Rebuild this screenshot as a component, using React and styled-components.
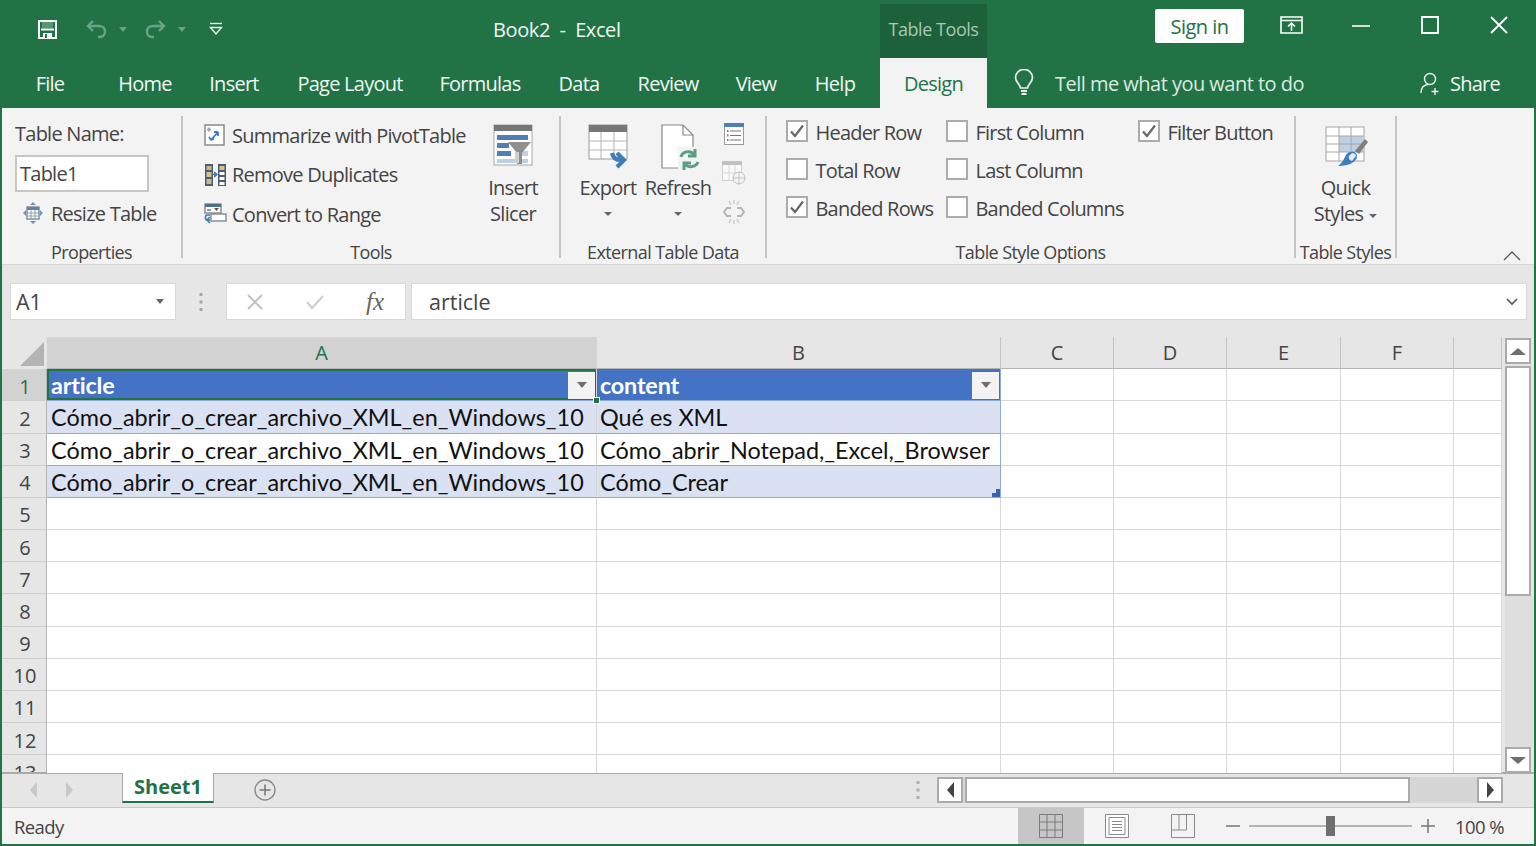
import React from "react";
import styled, { createGlobalStyle } from "styled-components";

const GREEN = "#217346";
const INK = "#444444";
const UI = '"Open Sans", "Noto Sans", sans-serif';

const Global = createGlobalStyle`
  html, body { margin: 0; padding: 0; overflow: hidden; }
  * { box-sizing: border-box; }
  body { font-family: ${UI}; }
`;

const Window = styled.div`
  width: 1536px; height: 846px; background: ${GREEN};
  padding: 0 2px 2px; display: flex; flex-direction: column; overflow: hidden;
  font-size: 20px; letter-spacing: -0.75px; color: ${INK};
`;

/* ---------- title bar ---------- */
const TitleBar = styled.div`display: flex; height: 58px; flex: none; align-items: center; color: #fff;`;
const TitleLeft = styled.div`width: 878px; display: flex; align-items: center; height: 100%;`;
const Qat = styled.div`width: 221px; padding-left: 36px; display: flex; align-items: center; flex: none;`;
const QatIcon = styled.svg`display: block; flex: none; margin-left: ${p => p.$ml || 0}px;`;
const WindowTitle = styled.div`margin-left: 270px; white-space: pre; color: #f1f6f3; font-size: 20px; letter-spacing: -0.4px;`;
const ContextTab = styled.div`
  width: 107px; align-self: stretch; margin-top: 4px; padding-bottom: 4px; background: #1c6139; color: #a8c8b4;
  display: flex; align-items: center; justify-content: center; font-size: 18px; letter-spacing: -0.45px;
`;
const SignIn = styled.div`
  margin-left: 168px; width: 89px; height: 34px; background: #fff; border-radius: 2px; color: ${GREEN};
  display: flex; align-items: center; justify-content: center; margin-top: -6px; letter-spacing: -0.55px;
`;
const WinControls = styled.div`display: flex; align-items: center; margin-top: -9px;`;
const WinIcon = styled.svg`display: block; flex: none; margin-left: ${p => p.$ml}px;`;

/* ---------- tabs ---------- */
const TabRow = styled.div`display: flex; height: 50px; flex: none; align-items: stretch; color: #f1f6f3;`;
const Tab = styled.div`
  width: ${p => p.$w}px; flex: none; display: flex; align-items: center; justify-content: center;
  margin-left: ${p => p.$ml || 0}px;
  ${p => p.$active && `background: #f3f3f3; color: ${GREEN};`}
`;
const TellMe = styled.div`display: flex; align-items: center; margin-left: 27px; gap: 21px; color: #dbe9e1; letter-spacing: -0.52px;`;
const Share = styled.div`display: flex; align-items: center; margin-left: auto; padding-right: 34px; gap: 9px; color: #f1f6f3;`;

/* ---------- ribbon ---------- */
const Ribbon = styled.div`display: flex; height: 157px; flex: none; background: #f3f3f3; border-bottom: 1px solid #d6d6d6;`;
const Group = styled.div`display: flex; flex-direction: column; flex: none; width: ${p => p.$w}px;`;
const GroupBody = styled.div`
  flex: 1; min-height: 0; display: flex; padding: ${p => p.$pad || 0};
  justify-content: ${p => p.$justify || "flex-start"};
`;
const GroupLabel = styled.div`height: 26px; flex: none; padding-top: 1px; line-height: 26px; text-align: center; font-size: 18px; letter-spacing: -0.6px; white-space: nowrap;`;
const Divider = styled.div`width: 2px; height: 142px; margin-top: 8px; flex: none; background: #c6c6c6;`;
const Column = styled.div`display: flex; flex-direction: column;`;
const FieldLabel = styled.div`height: 24px; line-height: 24px; margin-top: 14px;`;
const NameInput = styled.div`
  width: 134px; height: 37px; margin-top: 9px; border: 2px solid #c6c6c6; background: #fff; padding-left: 3px;
  line-height: 33px;
`;
const ToolRow = styled.div`
  display: flex; align-items: center; height: ${p => p.$h || 39.5}px; white-space: nowrap;
  margin-top: ${p => p.$mt || 0}px; margin-left: ${p => p.$ml || 0}px;
`;
const RowIcon = styled.div`width: ${p => p.$w || 28}px; flex: none; display: flex; align-items: center;`;
const LargeButton = styled.div`
  width: ${p => p.$w || 70}px; flex: none; display: flex; flex-direction: column; align-items: center;
  padding-top: ${p => p.$pt || 16}px; margin-top: ${p => p.$mt || 0}px; line-height: 26px; white-space: nowrap; text-align: center;
  letter-spacing: -0.7px;
`;
const LargeIconBox = styled.div`height: ${p => p.$h || 51}px; flex: none; padding-left: ${p => p.$pl || 0}px;`;
const DropArrow = styled.span`
  display: block; width: 0; height: 0; margin: 11px auto 0;
  border-left: 4px solid transparent; border-right: 4px solid transparent; border-top: 4px solid #666;
`;
const InlineArrow = styled.span`
  display: inline-block; width: 0; height: 0; margin: 0 0 3px 6px;
  border-left: 4px solid transparent; border-right: 4px solid transparent; border-top: 4px solid #666;
`;
const SmallIcons = styled.div`display: flex; flex-direction: column; align-items: center; padding-top: 6px; margin-left: 11px; width: 20px;`;
const SmallIconCell = styled.div`height: 39px; display: flex; align-items: center; justify-content: center;`;
const OptionsGrid = styled.div`
  flex: 1; display: grid; grid-template-columns: 160px 192px auto; grid-auto-rows: 38px; padding: 5px 0 0 18.500px;
  grid-template-rows: repeat(3, 38px); letter-spacing: -0.8px;
`;
const Option = styled.div`display: flex; align-items: center; gap: 8px; white-space: nowrap;`;
const CheckBox = styled.div`
  width: 22px; height: 22px; margin-top: -2px; border: 2px solid #ababab; background: #fff; flex: none;
  display: flex; align-items: center; justify-content: center;
`;
const CollapseBox = styled.div`margin-left: auto; align-self: flex-end; padding: 0 13px 3px 0;`;

/* ---------- formula bar ---------- */
const FormulaBar = styled.div`height: 72px; flex: none; background: #e6e6e6; display: flex; padding: 18px 7px 0 8px; align-items: flex-start;`;
const FieldBox = styled.div`
  height: 37px; background: #fff; border: 1px solid #d8d8d8; display: flex; align-items: center;
  width: ${p => (p.$w ? p.$w + "px" : "auto")}; flex: ${p => (p.$w ? "none" : 1)};
  margin-left: ${p => p.$ml || 0}px; padding: 0 ${p => p.$pr || 0}px 0 ${p => p.$pl || 0}px;
  justify-content: space-between;
  font-size: 21.5px; letter-spacing: 0;
`;
const GripBox = styled.div`width: 50px; height: 37px; flex: none; display: flex; align-items: center; justify-content: center;`;
const FxMark = styled.span`font-family: "Liberation Serif", serif; font-style: italic; font-weight: 400; font-size: 25px; color: #666;`;

/* ---------- sheet ---------- */
const SheetArea = styled.div`height: 436px; flex: none; display: flex; background: #e6e6e6;`;
const GridClip = styled.div`width: 1500px; flex: none; height: 436px; overflow: hidden;`;
const SheetGrid = styled.div`
  display: grid; grid-template-columns: 45px 550px 404px 113px 113px 114px 113px 48px; grid-auto-rows: 32.18px;
`;
const CornerCell = styled.div`background: #e6e6e6; display: flex; align-items: flex-end; justify-content: flex-end; padding: 0 3px 3px 0;`;
const ColHead = styled.div`
  display: flex; align-items: center; justify-content: center; font-size: 20px; letter-spacing: 0;
  background: ${p => (p.$on ? "#d2d2d2" : "#e6e6e6")}; color: ${p => (p.$on ? GREEN : "#444")};
  border-right: 1px solid ${p => (p.$on ? "#d2d2d2" : "#c4c4c4")}; border-bottom: 1px solid #b4b4b4;
`;
const RowHead = styled.div`
  display: flex; align-items: center; justify-content: center; font-size: 20px; letter-spacing: 0; padding: 3px 0 0 2px;
  background: ${p => (p.$on ? "#d2d2d2" : "#e6e6e6")}; color: ${p => (p.$on ? GREEN : "#444")};
  border-bottom: 1px solid #cfcfcf; border-right: 1px solid #b4b4b4;
`;
const Cell = styled.div`
  position: relative; display: flex; align-items: center; padding: 1px 0 0 ${p => p.$pl}px; white-space: nowrap; overflow: visible;
  font-family: Lato, "Liberation Sans", sans-serif; font-size: 23.4px; letter-spacing: 0; color: #111;
  background: ${p => (p.$head ? "#4472c4" : p.$band ? "#d9e1f2" : "#fff")};
  ${p => p.$head && "color: #fff; font-weight: 700; letter-spacing: -0.2px;"}
  border-right: 1px solid ${p => (p.$tbl ? (p.$edge ? "#8ea9db" : "#d4d4d4") : "#d9d9d9")};
  border-bottom: 1px solid ${p => (p.$tbl ? "#8ea9db" : "#d9d9d9")};
  ${p => p.$sel && `box-shadow: inset 0 0 0 2px ${GREEN};`}
`;
const FilterBtn = styled.div`
  position: absolute; right: 1px; top: 3px; width: 27px; height: 27px; background: #f3f3f3;
  display: flex; align-items: center; justify-content: center;
`;
const FillHandle = styled.div`position: absolute; right: -4px; bottom: -4px; width: 7px; height: 7px; background: ${GREEN}; border: 1px solid #fff; z-index: 2;`;
const ResizeMark = styled.svg`position: absolute; right: 0; bottom: 0; display: block;`;

const VScroll = styled.div`width: 34px; flex: none; display: flex; flex-direction: column; padding: 1px 3px 0 3px;`;
const ScrollBtn = styled.div`
  width: 26px; height: ${p => p.$h || 26}px; flex: none; background: #fff; border: 2px solid #ababab;
  display: flex; align-items: center; justify-content: center;
`;
const VThumb = styled.div`width: 26px; height: 230px; flex: none; background: #fff; border: 2px solid #ababab; margin-top: 2px;`;
const VTrack = styled.div`flex: 1; background: #dedede;`;
const Tri = styled.span`
  display: block; width: 0; height: 0;
  ${p => p.$dir === "up" && "border-left: 8px solid transparent; border-right: 8px solid transparent; border-bottom: 7px solid #6e6e6e;"}
  ${p => p.$dir === "down" && "border-left: 8px solid transparent; border-right: 8px solid transparent; border-top: 7px solid #6e6e6e;"}
  ${p => p.$dir === "left" && `border-top: 8px solid transparent; border-bottom: 8px solid transparent; border-right: 7px solid ${p.$c || "#444"};`}
  ${p => p.$dir === "right" && `border-top: 8px solid transparent; border-bottom: 8px solid transparent; border-left: 7px solid ${p.$c || "#444"};`}
`;

/* ---------- sheet tabs ---------- */
const SheetBar = styled.div`height: 36px; flex: none; margin-top: -1px; background: #e6e6e6; border-top: 2px solid #ababab; border-bottom: 1px solid #c8c8c8; display: flex; align-items: flex-start;`;
const TabNav = styled.div`width: 120px; height: 32px; flex: none; display: flex; align-items: center; gap: 29px; padding-left: 28px;`;
const SheetTab = styled.div`
  width: 92px; height: 31px; margin-top: -2px; flex: none; background: #fff; color: ${GREEN}; font-weight: 700; font-size: 20px; letter-spacing: 0;
  border: 1px solid #ababab; border-top: none; border-bottom: 2px solid ${GREEN}; display: flex; align-items: center; justify-content: center;
`;
const AddSheet = styled.svg`display: block; flex: none; margin: 5px 0 0 40px;`;
const SplitDots = styled.svg`display: block; flex: none; margin: 7px 17px 0 auto;`;
const HScroll = styled.div`width: 566px; height: 26px; margin: 3px 31px 0 0; flex: none; display: flex; align-items: stretch; background: #d6d6d6;`;
const HButton = styled.div`width: 26px; flex: none; background: #fff; border: 2px solid #ababab; display: flex; align-items: center; justify-content: center;`;
const HThumb = styled.div`width: 445px; flex: none; margin-left: 2px; background: #fff; border: 2px solid #ababab;`;

/* ---------- status bar ---------- */
const StatusBar = styled.div`flex: 1; min-height: 0; background: #f3f3f3; display: flex; align-items: stretch; font-size: 18.5px; letter-spacing: -0.6px;`;
const Ready = styled.div`display: flex; align-items: center; padding-left: 12px;`;
const ViewBtns = styled.div`display: flex; margin-left: auto;`;
const ViewBtn = styled.div`
  width: 66px; display: flex; align-items: center; justify-content: center;
  background: ${p => (p.$on ? "#c6c6c6" : "transparent")};
`;
const ZoomBox = styled.div`display: flex; align-items: center; width: 318px; padding-left: 10px;`;
const ZoomTrack = styled.div`position: relative; width: 163px; height: 2px; background: #b4b4b4; margin: 0 9px;`;
const ZoomThumb = styled.div`position: absolute; left: 77px; top: -9px; width: 9px; height: 20px; background: #6e6e6e;`;
const Percent = styled.div`margin-left: 20px; white-space: nowrap;`;

/* ---------- icons ---------- */
const Check = () => (
  <svg width="16" height="14" viewBox="0 0 16 14"><path d="M2 7.500l4 4.500L14 1.500" fill="none" stroke="#666" strokeWidth="2.200" /></svg>
);
const Opt = ({ on, children }) => (
  <Option><CheckBox>{on && <Check />}</CheckBox>{children}</Option>
);
const SaveIcon = () => (
  <QatIcon width="19" height="19" viewBox="0 0 19 19" $ml="0">
    <path d="M1 1h17v17H1z" fill="none" stroke="#fff" strokeWidth="2" />
    <path d="M4 1h11v7H4z" fill="#fff" opacity=".25" /><path d="M3 9.500h13" stroke="#fff" strokeWidth="2" />
    <path d="M5 18v-5h9v5z" fill="#fff" /><path d="M7 14v4h2v-4z" fill="#217346" />
  </QatIcon>
);
const UndoIcon = ({ flip, ml }) => (
  <QatIcon width="21" height="20" viewBox="0 0 21 20" $ml={ml} style={flip ? { transform: "scaleX(-1)" } : undefined}>
    <path d="M7 2L2 7l5 5M2 7h11c3.500 0 6 2.200 6 5.500S17 18 14 18h-2" fill="none" stroke="#6aa385" strokeWidth="2.400" />
  </QatIcon>
);
const QatDrop = ({ ml }) => (
  <QatIcon width="8" height="5" viewBox="0 0 8 5" $ml={ml}><path d="M0 0h8L4 5z" fill="#6aa385" /></QatIcon>
);
const Customize = () => (
  <QatIcon width="14" height="14" viewBox="0 0 14 14" $ml="23">
    <path d="M1 1.500h12" stroke="#e7efe9" strokeWidth="1.400" /><path d="M1.500 5.500L7 12l5.500-6.500z" fill="none" stroke="#e7efe9" strokeWidth="1.400" />
  </QatIcon>
);
const PivotIcon = () => (
  <svg width="21" height="22" viewBox="0 0 21 22" style={{ display: "block", flex: "none" }}>
    <rect x="1" y="1" width="19" height="20" fill="#fff" stroke="#8b8b8b" strokeWidth="1.500" />
    <path d="M5 3.500v4M3 5.500h4" stroke="#9a9a9a" strokeWidth="1.500" />
    <path d="M7 16l7-8M14 8h-4M14 8v4M7 16l-2-3M7 16l3-1" fill="none" stroke="#3f7cba" strokeWidth="1.800" />
  </svg>
);
const DuplicatesIcon = () => (
  <svg width="23" height="22" viewBox="0 0 23 22" style={{ display: "block", flex: "none" }}>
    <path d="M1 0h8v22H1z" fill="#4d5d6d" /><path d="M2.500 8h5v5h-5z" fill="#d8c28e" /><path d="M2.500 2h5v4h-5zM2.500 15h5v5h-5z" fill="#d8c28e" opacity=".9" />
    <path d="M14 0h8v22h-8z" fill="#4d5d6d" /><path d="M15.500 8h5v3h-5zM15.500 13h5v3h-5zM15.500 18h5v3h-5z" fill="#fff" /><path d="M15.500 2h5v4h-5z" fill="#d8c28e" />
    <path d="M9 10.500h3M10.500 8l3 2.500-3 2.500z" fill="#3f7cba" stroke="#3f7cba" />
  </svg>
);
const ConvertIcon = () => (
  <svg width="23" height="22" viewBox="0 0 23 22" style={{ display: "block", flex: "none" }}>
    <rect x="1" y="1" width="16" height="9" fill="#fff" stroke="#7f7f7f" strokeWidth="1.300" />
    <path d="M1 1h16v3H1z" fill="#4d6f8f" /><path d="M3 6h4v2H3z" fill="#999" /><path d="M10 5h5l-2.500 3z" fill="#555" />
    <rect x="7" y="11" width="15" height="7" fill="#fff" stroke="#7f7f7f" strokeWidth="1.300" />
    <path d="M6 12H3c-2 0-2 5 0 5h3M6 20l-3-3 3-3" fill="none" stroke="#3f7cba" strokeWidth="1.700" />
  </svg>
);
const ResizeIcon = () => (
  <svg width="20" height="22" viewBox="0 0 20 22" style={{ display: "block", flex: "none" }}>
    <rect x="4" y="5" width="12" height="12" fill="#fff" stroke="#6f7f8f" strokeWidth="1.300" />
    <path d="M4 5h12v3H4z" fill="#5f83aa" /><path d="M8 8v9M12 8v9M4 11h12M4 14h12" stroke="#8f9fae" />
    <path d="M10 0l3 3H7zM10 22l3-3H7zM0 11l3-3v6zM20 11l-3-3v6z" fill="#6f93ba" />
  </svg>
);
const SlicerIcon = () => (
  <svg width="40" height="42" viewBox="0 0 40 42" style={{ display: "block" }}>
    <rect x="1" y="1" width="38" height="40" fill="#fff" stroke="#a6a6a6" />
    <path d="M1 1h38v6H1z" fill="#767676" />
    <path d="M4 11h31v5H4z" fill="#4f7fb6" /><path d="M4 19h12v5H4zM4 27h14v5H4z" fill="#4f7fb6" />
    <path d="M4 35h31v4H4z" fill="#bcd0e6" /><path d="M26 27h9v5h-9z" fill="#bcd0e6" />
    <path d="M15 18h23l-9 11v11h-5V29z" fill="#8f8f8f" /><path d="M22 28h4v11h-4z" fill="#d0d0d0" />
  </svg>
);
const ExportIcon = () => (
  <svg width="44" height="46" viewBox="0 0 44 46" style={{ display: "block" }}>
    <rect x="1" y="1" width="38" height="34" fill="#fff" stroke="#9a9a9a" />
    <path d="M1 1h38v7H1z" fill="#767676" />
    <path d="M1 17h38M1 26h38M13 8v27M26 8v27" stroke="#b4b4b4" />
    <path d="M24 29c1 5 5 7 9 7M29 29l7 7-7 7" fill="none" stroke="#3f7cba" strokeWidth="4.200" />
  </svg>
);
const RefreshIcon = () => (
  <svg width="44" height="46" viewBox="0 0 44 46" style={{ display: "block" }}>
    <path d="M4 1h21l10 10v33H4z" fill="#fff" stroke="#8a8a8a" strokeWidth="1.200" />
    <path d="M25 1v10h10" fill="none" stroke="#8a8a8a" strokeWidth="1.200" />
    <rect x="20" y="23" width="24" height="23" fill="#f3f3f3" />
    <path d="M23 33c1-5 9-8 14-2M37 25v7h-7M40 38c-2 5-10 7-14 1M26 46v-7h7" fill="none" stroke="#5a9f82" strokeWidth="3" />
  </svg>
);
const SmallList = () => (
  <svg width="20" height="22" viewBox="0 0 20 22" style={{ display: "block" }}>
    <rect x=".5" y=".5" width="19" height="21" fill="#fff" stroke="#9a9a9a" /><path d="M0 0h20v4H0z" fill="#4f7fb6" />
    <path d="M6 8h11M6 12.500h11M6 17h11" stroke="#777" /><path d="M3 8h1.500M3 12.500h1.500M3 17h1.500" stroke="#777" strokeWidth="2" />
  </svg>
);
const SmallWeb = () => (
  <svg width="24" height="24" viewBox="0 0 24 24" style={{ display: "block", opacity: 0.55 }}>
    <rect x=".5" y=".5" width="19" height="19" fill="#fff" stroke="#b4b4b4" /><path d="M0 0h20v4H0z" fill="#9a9a9a" />
    <path d="M7 4v16M13 4v16M0 12h20" stroke="#c4c4c4" />
    <circle cx="17" cy="17" r="6" fill="#f3f3f3" stroke="#999" /><path d="M11 17h12M17 11v12" stroke="#999" />
  </svg>
);
const SmallUnlink = () => (
  <svg width="22" height="24" viewBox="0 0 22 24" style={{ display: "block", opacity: 0.6 }}>
    <path d="M8 8H4l-3 4 3 4h4M14 8h4l3 4-3 4h-4" fill="none" stroke="#8a8a8a" strokeWidth="2" />
    <path d="M6 1l2 4M16 1l-2 4M11 0v4M6 23l2-4M16 23l-2-4M11 24v-4" stroke="#b0b0b0" strokeWidth="1.400" />
  </svg>
);
const QuickIcon = () => (
  <svg width="44" height="42" viewBox="0 0 44 42" style={{ display: "block" }}>
    <rect x="1" y="1" width="38" height="34" fill="#fff" stroke="#a6a6a6" />
    <path d="M14 10h25v16H14z" fill="#bed0e6" />
    <path d="M1 10h38M1 18h38M1 26h38M14 1v34M26 1v34" stroke="#a6a6a6" />
    <path d="M30 25L40 13l3 3-9 12z" fill="#7f7f7f" />
    <path d="M26 26c3-1 6 1 6 4 0 6-8 10-19 10 3-2 5-5 7-9 1-3 3-5 6-5z" fill="#3f7cba" />
    <path d="M27 27c2 0 4 1 4 3l-4 5c-3-1-4-3-3-5z" fill="#fff" opacity=".85" />
  </svg>
);
const Chev = () => (
  <svg width="18" height="11" viewBox="0 0 18 11" style={{ display: "block" }}><path d="M1 10l8-8 8 8" fill="none" stroke="#555" strokeWidth="1.300" /></svg>
);

const COLS = ["A", "B", "C", "D", "E", "F", ""];
const ROWS = {
  2: ["Cómo_abrir_o_crear_archivo_XML_en_Windows_10", "Qué es XML"],
  3: ["Cómo_abrir_o_crear_archivo_XML_en_Windows_10", "Cómo_abrir_Notepad,_Excel,_Browser"],
  4: ["Cómo_abrir_o_crear_archivo_XML_en_Windows_10", "Cómo_Crear"],
};
const FilterArrow = () => (
  <svg width="12" height="7" viewBox="0 0 12 7"><path d="M1 0h10L6 6z" fill="#6e6e6e" /></svg>
);

export default function App() {
  const rowNums = Array.from({ length: 13 }, (_, i) => i + 1);
  return (
    <Window>
      <Global />
      <TitleBar>
        <TitleLeft>
          <Qat>
            <SaveIcon />
            <UndoIcon ml={29} />
            <QatDrop ml={12} />
            <UndoIcon flip ml={18} />
            <QatDrop ml={12} />
            <Customize />
          </Qat>
          <WindowTitle>Book2  -  Excel</WindowTitle>
        </TitleLeft>
        <ContextTab>Table Tools</ContextTab>
        <SignIn>Sign in</SignIn>
        <WinControls>
          <WinIcon width="23" height="18" viewBox="0 0 23 18" $ml="36">
            <path d="M1 1h21v16H1zM1 4.500h21" fill="none" stroke="#fff" strokeWidth="1.600" />
            <path d="M11.500 15V7.500M8 10.500l3.500-3.500 3.500 3.500" fill="none" stroke="#fff" strokeWidth="1.500" />
          </WinIcon>
          <WinIcon width="18" height="18" viewBox="0 0 18 18" $ml="49"><path d="M0 10h18" stroke="#fff" strokeWidth="1.600" /></WinIcon>
          <WinIcon width="18" height="18" viewBox="0 0 18 18" $ml="51"><path d="M1 1h16v16H1z" fill="none" stroke="#fff" strokeWidth="1.800" /></WinIcon>
          <WinIcon width="18" height="18" viewBox="0 0 18 18" $ml="51"><path d="M1 1l16 16M17 1L1 17" fill="none" stroke="#fff" strokeWidth="1.800" /></WinIcon>
        </WinControls>
      </TitleBar>

      <TabRow>
        <Tab $w={96}>File</Tab>
        <Tab $w={94}>Home</Tab>
        <Tab $w={84}>Insert</Tab>
        <Tab $w={148}>Page Layout</Tab>
        <Tab $w={112}>Formulas</Tab>
        <Tab $w={86}>Data</Tab>
        <Tab $w={92}>Review</Tab>
        <Tab $w={84}>View</Tab>
        <Tab $w={74}>Help</Tab>
        <Tab $w={107} $ml={8} $active>Design</Tab>
        <TellMe>
          <svg width="20" height="28" viewBox="0 0 20 28" style={{ display: "block" }}>
            <path d="M6.500 19c0-3.500-5-5.500-5-10.500a8.500 8 0 0 1 17 0c0 5-5 7-5 10.500z" fill="none" stroke="#eef4f0" strokeWidth="1.700" />
            <path d="M7 22h6M7.500 25h5" stroke="#eef4f0" strokeWidth="1.800" />
          </svg>
          Tell me what you want to do
        </TellMe>
        <Share>
          <svg width="21" height="24" viewBox="0 0 21 24" style={{ display: "block" }}>
            <circle cx="10" cy="8" r="5.500" fill="none" stroke="#eef4f0" strokeWidth="1.400" />
            <path d="M1 22c0-5 3-8 7-8.500M15 17v7M11.500 20.500h7" fill="none" stroke="#eef4f0" strokeWidth="1.400" />
          </svg>
          Share
        </Share>
      </TabRow>

      <Ribbon>
        <Group $w={179}>
          <GroupBody $pad="0 0 0 13px">
            <Column>
              <FieldLabel>Table Name:</FieldLabel>
              <NameInput>Table1</NameInput>
              <ToolRow $h={24} $mt={9} $ml={8}><RowIcon><ResizeIcon /></RowIcon>Resize Table</ToolRow>
            </Column>
          </GroupBody>
          <GroupLabel>Properties</GroupLabel>
        </Group>
        <Divider />
        <Group $w={376}>
          <GroupBody $pad="7.500px 16px 0 21px" $justify="space-between">
            <Column>
              <ToolRow><RowIcon><PivotIcon /></RowIcon>Summarize with PivotTable</ToolRow>
              <ToolRow><RowIcon><DuplicatesIcon /></RowIcon>Remove Duplicates</ToolRow>
              <ToolRow><RowIcon><ConvertIcon /></RowIcon>Convert to Range</ToolRow>
            </Column>
            <LargeButton $w={60} $mt={-7.5}>
              <LargeIconBox><SlicerIcon /></LargeIconBox>
              Insert<br />Slicer
            </LargeButton>
          </GroupBody>
          <GroupLabel>Tools</GroupLabel>
        </Group>
        <Divider />
        <Group $w={204}>
          <GroupBody $pad="0 0 0 12px">
            <LargeButton>
              <LargeIconBox $pl={3}><ExportIcon /></LargeIconBox>
              Export<DropArrow />
            </LargeButton>
            <LargeButton>
              <LargeIconBox $pl={3}><RefreshIcon /></LargeIconBox>
              Refresh<DropArrow />
            </LargeButton>
            <SmallIcons>
              <SmallIconCell><SmallList /></SmallIconCell>
              <SmallIconCell><SmallWeb /></SmallIconCell>
              <SmallIconCell><SmallUnlink /></SmallIconCell>
            </SmallIcons>
          </GroupBody>
          <GroupLabel>External Table Data</GroupLabel>
        </Group>
        <Divider />
        <Group $w={527}>
          <OptionsGrid>
            <Opt on>Header Row</Opt>
            <Opt>First Column</Opt>
            <Opt on>Filter Button</Opt>
            <Opt>Total Row</Opt>
            <Opt>Last Column</Opt>
            <span />
            <Opt on>Banded Rows</Opt>
            <Opt>Banded Columns</Opt>
          </OptionsGrid>
          <GroupLabel>Table Style Options</GroupLabel>
        </Group>
        <Divider />
        <Group $w={99}>
          <GroupBody>
            <LargeButton $w={99} $pt={18}>
              <LargeIconBox $h={49} $pl={3}><QuickIcon /></LargeIconBox>
              Quick<br /><span>Styles<InlineArrow /></span>
            </LargeButton>
          </GroupBody>
          <GroupLabel>Table Styles</GroupLabel>
        </Group>
        <Divider />
        <CollapseBox><Chev /></CollapseBox>
      </Ribbon>

      <FormulaBar>
        <FieldBox $w={166} $pl={5} $pr={11}>A1<svg width="8" height="5" viewBox="0 0 8 5"><path d="M0 0h8L4 5z" fill="#666" /></svg></FieldBox>
        <GripBox>
          <svg width="4" height="18" viewBox="0 0 4 18"><path d="M2 0v3M2 7.500v3M2 15v3" stroke="#a6a6a6" strokeWidth="3" /></svg>
        </GripBox>
        <FieldBox $w={180} $pl={19} $pr={21}>
          <svg width="18" height="18" viewBox="0 0 18 18"><path d="M2 2l14 14M16 2L2 16" stroke="#bdbdbd" strokeWidth="1.800" /></svg>
          <svg width="20" height="16" viewBox="0 0 20 16"><path d="M2 8l5 6L18 2" fill="none" stroke="#cfcfcf" strokeWidth="2.200" /></svg>
          <FxMark>fx</FxMark>
        </FieldBox>
        <FieldBox $ml={5} $pl={17} $pr={8}>
          article
          <svg width="12" height="8" viewBox="0 0 12 8"><path d="M1 1l5 5 5-5" fill="none" stroke="#555" strokeWidth="1.600" /></svg>
        </FieldBox>
      </FormulaBar>

      <SheetArea>
        <GridClip>
          <SheetGrid>
            <CornerCell>
              <svg width="24" height="24" viewBox="0 0 24 24"><path d="M24 0v24H0z" fill="#b4b4b4" /></svg>
            </CornerCell>
            {COLS.map((c, i) => <ColHead key={i} $on={c === "A"}>{c}</ColHead>)}
            {rowNums.map(r => (
              <React.Fragment key={r}>
                <RowHead $on={r === 1}>{r}</RowHead>
                {COLS.map((c, i) => {
                  const inTable = r <= 4 && i < 2;
                  const isHead = inTable && r === 1;
                  const text = isHead ? (i === 0 ? "article" : "content") : inTable ? ROWS[r][i] : "";
                  return (
                    <Cell key={i} $pl={i === 0 ? 4 : 3} $tbl={inTable} $head={isHead} $band={inTable && (r === 2 || r === 4)} $edge={i === 1} $sel={isHead && i === 0}>
                      {text}
                      {isHead && <FilterBtn><FilterArrow /></FilterBtn>}
                      {isHead && i === 0 && <FillHandle />}
                      {r === 4 && i === 1 && (
                        <ResizeMark width="8" height="8" viewBox="0 0 8 8"><path d="M8 0v8H0V4h4V0z" fill="#3c5fb4" /></ResizeMark>
                      )}
                    </Cell>
                  );
                })}
              </React.Fragment>
            ))}
          </SheetGrid>
        </GridClip>
        <VScroll>
          <ScrollBtn><Tri $dir="up" /></ScrollBtn>
          <VThumb />
          <VTrack />
          <ScrollBtn><Tri $dir="down" /></ScrollBtn>
        </VScroll>
      </SheetArea>

      <SheetBar>
        <TabNav><Tri $dir="left" $c="#c8c8c8" /><Tri $dir="right" $c="#c8c8c8" /></TabNav>
        <SheetTab>Sheet1</SheetTab>
        <AddSheet width="22" height="22" viewBox="0 0 22 22">
          <circle cx="11" cy="11" r="10" fill="none" stroke="#8a8a8a" strokeWidth="1.400" />
          <path d="M11 5.500v11M5.500 11h11" stroke="#777" strokeWidth="1.500" />
        </AddSheet>
        <SplitDots width="4" height="18" viewBox="0 0 4 18"><path d="M2 0v3M2 7.500v3M2 15v3" stroke="#b0b0b0" strokeWidth="3" /></SplitDots>
        <HScroll>
          <HButton><Tri $dir="left" /></HButton>
          <HThumb />
          <HButton style={{ marginLeft: "auto" }}><Tri $dir="right" /></HButton>
        </HScroll>
      </SheetBar>

      <StatusBar>
        <Ready>Ready</Ready>
        <ViewBtns>
          <ViewBtn $on>
            <svg width="24" height="24" viewBox="0 0 24 24"><path d="M.5.500h23v23H.500zM8 .5v23M16 .5v23M.5 8h23M.5 16h23" fill="none" stroke="#7a7a7a" /></svg>
          </ViewBtn>
          <ViewBtn>
            <svg width="24" height="24" viewBox="0 0 24 24"><path d="M.5.500h23v23H.500z" fill="#fff" stroke="#8a8a8a" /><path d="M4 3.500h16v17H4z" fill="none" stroke="#8a8a8a" /><path d="M7 7.500h10M7 10.500h10M7 13.500h10M7 16.500h10" stroke="#8a8a8a" /></svg>
          </ViewBtn>
          <ViewBtn>
            <svg width="24" height="24" viewBox="0 0 24 24"><path d="M.5.500h23v23H.500zM.5 16h15V.5M8 .5V16" fill="none" stroke="#8a8a8a" /></svg>
          </ViewBtn>
        </ViewBtns>
        <ZoomBox>
          <svg width="14" height="14" viewBox="0 0 14 14" style={{ flex: "none" }}><path d="M0 7h14" stroke="#777" strokeWidth="1.500" /></svg>
          <ZoomTrack><ZoomThumb /></ZoomTrack>
          <svg width="14" height="14" viewBox="0 0 14 14" style={{ flex: "none" }}><path d="M0 7h14M7 0v14" stroke="#777" strokeWidth="1.500" /></svg>
          <Percent>100 %</Percent>
        </ZoomBox>
      </StatusBar>
    </Window>
  );
}
